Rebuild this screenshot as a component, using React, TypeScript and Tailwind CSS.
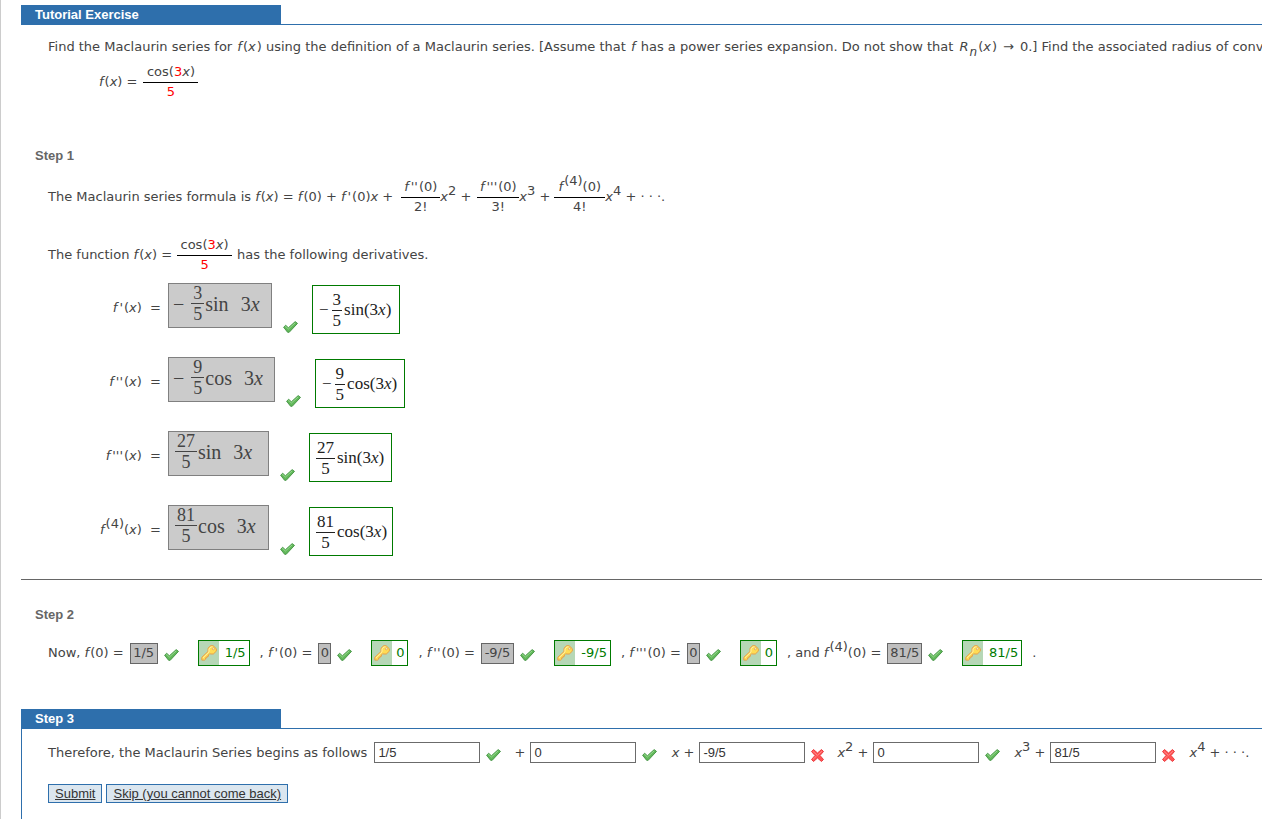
import type { ReactNode } from "react";

const derivatives = [
  { order: <Fn primes="'" />, sign: "−", top: "3", bottom: "5", fn: "sin", box: "w-[104px]", key: "w-[88px]" },
  { order: <Fn primes="''" />, sign: "−", top: "9", bottom: "5", fn: "cos", box: "w-[107px]", key: "w-[90px]" },
  { order: <Fn primes="'''" />, sign: "", top: "27", bottom: "5", fn: "sin", box: "w-[101px]", key: "w-[83px]" },
  { order: <><Fn /><Sup>(4)</Sup></>, sign: "", top: "81", bottom: "5", fn: "cos", box: "w-[101px]", key: "w-[84px]" },
];

const values = [
  { before: "Now, ", fn: <Fn />, value: "1/5", box: "w-[28px]", key: "w-[52px]" },
  { before: ", ", fn: <Fn primes="'" />, value: "0", box: "w-[13px]", key: "w-[37px]" },
  { before: ", ", fn: <Fn primes="''" />, value: "-9/5", box: "w-[33px]", key: "w-[57px]" },
  { before: ", ", fn: <Fn primes="'''" />, value: "0", box: "w-[13px]", key: "w-[37px]" },
  { before: ", and ", fn: <><Fn /><Sup>(4)</Sup></>, value: "81/5", box: "w-[35px]", key: "w-[60px]" },
];

const terms = [
  { label: "Constant term", value: "1/5", right: true, after: <>+</>, gap: "w-[50px]" },
  { label: "Coefficient of x", value: "0", right: true, after: <><i>x</i> +</>, gap: "w-[63px]" },
  { label: "Coefficient of x squared", value: "-9/5", right: false, after: <><i>x</i><Sup>2</Sup> +</>, gap: "w-[68px]" },
  { label: "Coefficient of x cubed", value: "0", right: true, after: <><i>x</i><Sup>3</Sup> +</>, gap: "w-[71px]" },
  { label: "Coefficient of x to the fourth", value: "81/5", right: false, after: <><i>x</i><Sup>4</Sup> + · · ·.</>, gap: "w-[98px]" },
];

function Fn({ primes }: { primes?: string }) {
  return (
    <i className="pr-px">
      f{primes && <span className="pl-[2px]">{primes}</span>}
    </i>
  );
}

function Sup({ children }: { children: ReactNode }) {
  return <sup className="-top-[6px] text-[13px] leading-none not-italic">{children}</sup>;
}

function Fraction({ top, bottom, width }: { top: ReactNode; bottom: ReactNode; width: string }) {
  return (
    <span className={`flex flex-col text-center leading-[18px] ${width}`}>
      <span className="border-b border-black pb-px">{top}</span>
      <span>{bottom}</span>
    </span>
  );
}

function CosFraction() {
  return (
    <Fraction
      width="w-[55px]"
      top={<>cos(<span className="text-[#f00]">3</span><i>x</i>)</>}
      bottom={<span className="text-[#f00]">5</span>}
    />
  );
}

function MathFraction({ top, bottom, pad }: { top: string; bottom: string; pad: string }) {
  return (
    <span className="flex flex-col text-center leading-5">
      <span className={`border-b border-current ${pad}`}>{top}</span>
      <span>{bottom}</span>
    </span>
  );
}

function Check() {
  return (
    <svg className="h-[12px] w-[15px] shrink-0" viewBox="0 0 15 12" role="img" aria-label="Correct">
      <path d="M.6 6.2 2.7 4.3 5.4 6.8 12.2.6 14.5 2.4 6.2 11.3H4.6Z" fill="#62b85a" stroke="#3f9140" strokeWidth=".9" strokeLinejoin="round" />
      <path d="M2 6 2.8 5.5 5.4 8 12.2 1.8" fill="none" stroke="#97d990" strokeWidth="1" />
    </svg>
  );
}

function Cross() {
  return (
    <svg className="h-[13px] w-[13px] shrink-0" viewBox="0 0 13 13" role="img" aria-label="Incorrect">
      <path d="M.5 2.5 2.5.5 6.5 4 10.5.5l2 2L9 6.5l3.5 4-2 2-4-3.5-4 3.5-2-2L4 6.5Z" fill="#ff5353" stroke="#ea3e42" strokeLinejoin="round" />
      <path d="M1.8 2.3 6.5 6.3 11 2.1M2 10.4 5.5 7" fill="none" stroke="#ff8b8b" strokeWidth=".9" />
    </svg>
  );
}

function Key() {
  return (
    <svg className="h-4 w-4" viewBox="0 0 16 16" aria-hidden="true">
      <path
        d="M9.6.7h2.5l3.2 3v2.5L12.3 9H9.6L8.8 8.6 7.4 10v1.3H6v1.5H4.6v1.4l-1 .9H.8v-2.8L7 6.5V3.2Z"
        fill="#ffdc55"
        stroke="#e5a04a"
        strokeLinejoin="round"
      />
      <path d="M2 12.8 8 6.9V3.8L10.2 1.9h1.5" fill="none" stroke="#fff1a6" />
      <circle cx="12.3" cy="3.8" r="1" fill="#fff" stroke="#d99034" strokeWidth=".6" />
    </svg>
  );
}

function Banner({ children }: { children: ReactNode }) {
  return (
    <div className="border-b border-[#2e6fac]">
      <h2 className="h-[19px] w-[260px] bg-[#2e6fac] pl-[14px] font-['Liberation_Sans',sans-serif] text-[13px] leading-[19px] font-bold text-white">
        {children}
      </h2>
    </div>
  );
}

function StepTitle({ children }: { children: ReactNode }) {
  return (
    <h2 className="pl-[14px] font-['Liberation_Sans',sans-serif] text-[13px] leading-5 font-bold text-[#666]">
      {children}
    </h2>
  );
}

export default function App() {
  return (
    <main className="flex min-h-screen flex-col overflow-hidden border-l border-[#ccc] bg-white pt-[5px] pl-5 font-['DejaVu_Sans',sans-serif] text-[13px] leading-5 whitespace-nowrap text-[#444]">
      <Banner>Tutorial Exercise</Banner>
      <section className="pl-[27px]">
        <p className="h-8 pt-3">
          Find the Maclaurin series for <i className="px-px">f</i>(<i className="pr-px">x</i>) using the definition of a
          Maclaurin series. [Assume that <i className="px-px">f</i> has a power series expansion. Do not show that{" "}
          <i className="pl-[2px]">R</i>
          <sub className="-bottom-[5px] px-px text-[12px] leading-none italic">n</sub>(<i className="pr-px">x</i>)
          <span className="px-[6px]">→</span>0.] Find the associated radius of convergence
        </p>
        <div className="flex h-[38px] items-center gap-[6px] pt-[12px] pl-[51px]">
          <span><Fn />(<i>x</i>) =</span>
          <CosFraction />
        </div>
      </section>

      <section className="pt-[51px]">
        <StepTitle>Step 1</StepTitle>
        <div className="pl-[27px]">
          <div className="mt-[11px] flex h-10 items-center">
            <span className="pr-2">
              The Maclaurin series formula is <Fn />(<i>x</i>) = <Fn />(0) + <Fn primes="'" />(0)<i>x</i> +
            </span>
            <Fraction width="w-[39px]" top={<><Fn primes="''" />(0)</>} bottom="2!" />
            <span className="pr-[6px]"><i>x</i><Sup>2</Sup> +</span>
            <Fraction width="w-[42px]" top={<><Fn primes="'''" />(0)</>} bottom="3!" />
            <span className="pr-1"><i>x</i><Sup>3</Sup> +</span>
            <Fraction width="w-[51px]" top={<><Fn /><Sup>(4)</Sup>(0)</>} bottom="4!" />
            <span><i>x</i><Sup>4</Sup> + · · ·.</span>
          </div>
          <div className="mt-[18px] flex h-10 items-center gap-[5px]">
            <span>The function <Fn />(<i>x</i>) =</span>
            <CosFraction />
            <span>has the following derivatives.</span>
          </div>
          <div className="pt-2">
            {derivatives.map(({ order, sign, top, bottom, fn, box, key }, i) => (
              <div key={i} className="flex h-[74px] items-start">
                <span className="w-[113px] pt-[15px] text-right">
                  {order}(<i>x</i>)&nbsp; =
                </span>
                <span
                  className={`ml-[7px] flex h-[45px] items-center border border-[#808080] bg-[#cbcbcb] pb-1 font-['Liberation_Serif',serif] text-lg ${sign ? "pl-1" : "pl-[6px]"} ${box}`}
                >
                  {sign && <span className="pr-[7px] text-xl">{sign}</span>}
                  <MathFraction top={top} bottom={bottom} pad="px-[2px]" />
                  <span className="flex gap-3 pl-px text-xl">
                    <span>{fn}</span>
                    <span>3<i>x</i></span>
                  </span>
                </span>
                <span className="w-[40px] pt-[38px] pl-[11px]"><Check /></span>
                <span
                  className={`mt-[2px] flex h-[49px] items-center border border-[#007a00] pt-px pl-[6px] font-['Liberation_Serif',serif] text-[17px] text-[#222] ${key}`}
                >
                  {sign && <span className="pr-[3px]">{sign}</span>}
                  <MathFraction top={top} bottom={bottom} pad="px-px" />
                  <span className="pl-[2px]">{fn}(3<i>x</i>)</span>
                </span>
              </div>
            ))}
          </div>
        </div>
        <hr className="border-[#666]" />
      </section>

      <section className="pt-[25px]">
        <StepTitle>Step 2</StepTitle>
        <div className="flex items-center pt-[15px] pl-[27px]">
          {values.map(({ before, fn, value, box, key }, i) => (
            <span key={i} className="flex items-center">
              <span className="pr-[6px]">
                {before}
                {fn}(0) =
              </span>
              <span className={`flex h-[21px] items-center justify-center border border-[#666] bg-[#bfbfbf] ${box}`}>
                {value}
              </span>
              <span className="w-[40px] pt-1 pl-[6px]"><Check /></span>
              <span className={`mr-[10px] flex h-[26px] items-center border border-[#007a00] text-[#007a00] ${key}`}>
                <span className="flex h-full w-5 items-center justify-center bg-[#b6d7b6]"><Key /></span>
                <span className="flex-1 pr-[3px] text-right">{value}</span>
              </span>
            </span>
          ))}
          <span>.</span>
        </div>
      </section>

      <section className="flex flex-1 flex-col pt-[43px]">
        <Banner>Step 3</Banner>
        <form className="flex-1 border-l border-[#2e6fac] pt-[13px] pl-[26px]" onSubmit={(e) => e.preventDefault()}>
          <div className="flex items-center">
            <span className="pr-[7px]">Therefore, the Maclaurin Series begins as follows</span>
            {terms.map(({ label, value, right, after, gap }) => (
              <span key={label} className="flex items-center">
                <input
                  aria-label={label}
                  defaultValue={value}
                  className="h-[21px] w-[106px] border border-[#6b6b6b] bg-white px-[3px] font-['Liberation_Sans',sans-serif] text-[13px] text-[#333]"
                />
                <span className={`flex items-center justify-between ${gap}`}>
                  <span className="pt-[5px] pl-[6px]">{right ? <Check /> : <Cross />}</span>
                  <span className="pr-[5px]">{after}</span>
                </span>
              </span>
            ))}
          </div>
          <div className="flex gap-1 pt-[21px] font-['Liberation_Sans',sans-serif] text-[13px] text-[#333]">
            <button type="submit" className="h-[19px] border border-[#2e6fac] bg-[#dbe6ef] px-[6px] leading-[17px] underline">
              Submit
            </button>
            <button type="button" className="h-[19px] border border-[#2e6fac] bg-[#dbe6ef] px-[6px] leading-[17px] underline">
              Skip (you cannot come back)
            </button>
          </div>
        </form>
      </section>
    </main>
  );
}
